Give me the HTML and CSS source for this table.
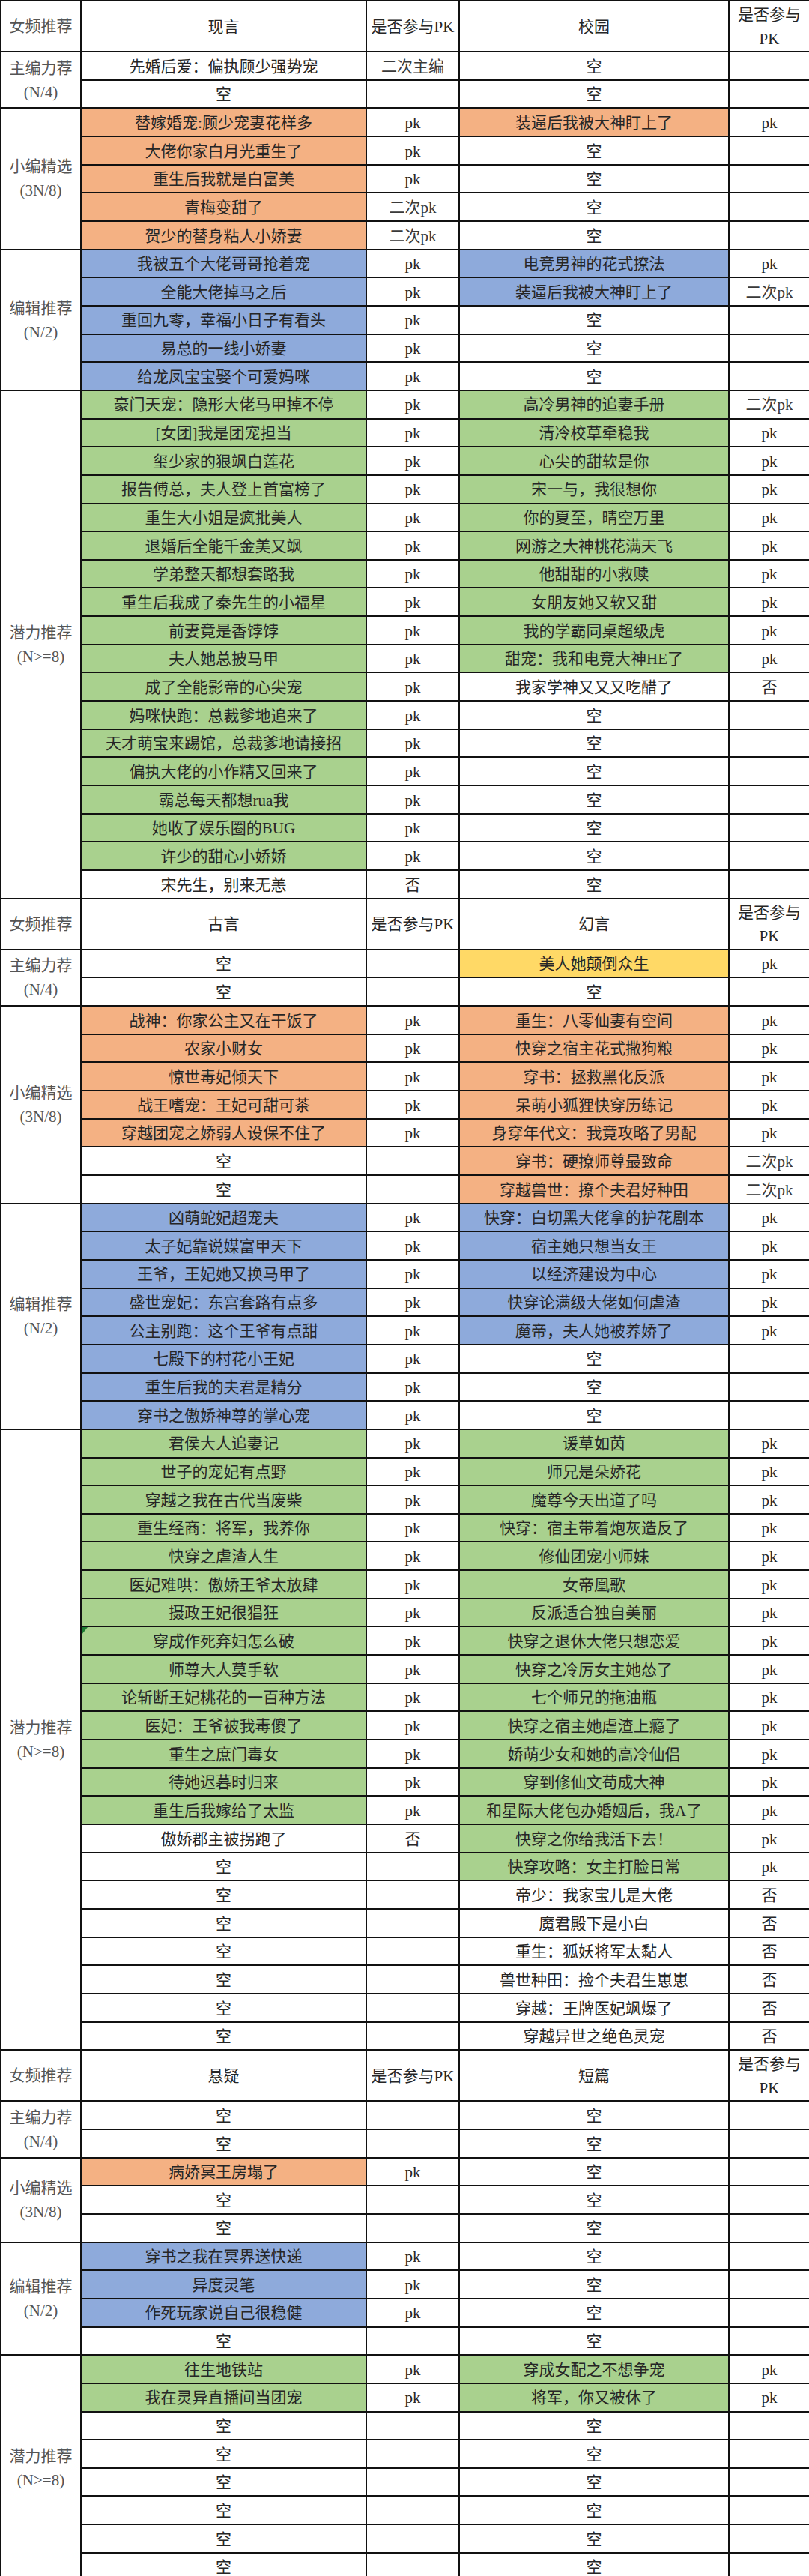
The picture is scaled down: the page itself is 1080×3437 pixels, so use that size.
FILE: index.html
```html
<!DOCTYPE html>
<html lang="zh-CN">
<head>
<meta charset="utf-8">
<title>女频推荐</title>
<link rel="stylesheet" href="styles.css">
</head>
<body>
<table class="sheet">
<colgroup><col class="c-label"><col class="c-title"><col class="c-pk"><col class="c-title2"><col class="c-pk2"></colgroup>
<tbody>
<tr class="hd"><td class="lab">女频推荐</td><td>现言</td><td>是否参与PK</td><td>校园</td><td>是否参与PK</td></tr>
<tr><td class="lab" rowspan="2">主编力荐<br>(N/4)</td><td>先婚后爱：偏执顾少强势宠</td><td class="muted">二次主编</td><td>空</td><td></td></tr>
<tr><td>空</td><td></td><td>空</td><td></td></tr>
<tr><td class="lab" rowspan="5">小编精选<br>(3N/8)</td><td class="o">替嫁婚宠:顾少宠妻花样多</td><td>pk</td><td class="o">装逼后我被大神盯上了</td><td>pk</td></tr>
<tr><td class="o">大佬你家白月光重生了</td><td>pk</td><td>空</td><td></td></tr>
<tr><td class="o">重生后我就是白富美</td><td>pk</td><td>空</td><td></td></tr>
<tr><td class="o">青梅变甜了</td><td class="muted">二次pk</td><td>空</td><td></td></tr>
<tr><td class="o">贺少的替身粘人小娇妻</td><td class="muted">二次pk</td><td>空</td><td></td></tr>
<tr><td class="lab" rowspan="5">编辑推荐<br>(N/2)</td><td class="b">我被五个大佬哥哥抢着宠</td><td>pk</td><td class="b">电竞男神的花式撩法</td><td>pk</td></tr>
<tr><td class="b">全能大佬掉马之后</td><td>pk</td><td class="b">装逼后我被大神盯上了</td><td class="muted">二次pk</td></tr>
<tr><td class="b">重回九零，幸福小日子有看头</td><td>pk</td><td>空</td><td></td></tr>
<tr><td class="b">易总的一线小娇妻</td><td>pk</td><td>空</td><td></td></tr>
<tr><td class="b">给龙凤宝宝娶个可爱妈咪</td><td>pk</td><td>空</td><td></td></tr>
<tr><td class="lab" rowspan="18">潜力推荐<br>(N&gt;=8)</td><td class="g">豪门天宠：隐形大佬马甲掉不停</td><td>pk</td><td class="g">高冷男神的追妻手册</td><td class="muted">二次pk</td></tr>
<tr><td class="g">[女团]我是团宠担当</td><td>pk</td><td class="g">清冷校草牵稳我</td><td>pk</td></tr>
<tr><td class="g">玺少家的狠飒白莲花</td><td>pk</td><td class="g">心尖的甜软是你</td><td>pk</td></tr>
<tr><td class="g">报告傅总，夫人登上首富榜了</td><td>pk</td><td class="g">宋一与，我很想你</td><td>pk</td></tr>
<tr><td class="g">重生大小姐是疯批美人</td><td>pk</td><td class="g">你的夏至，晴空万里</td><td>pk</td></tr>
<tr><td class="g">退婚后全能千金美又飒</td><td>pk</td><td class="g">网游之大神桃花满天飞</td><td>pk</td></tr>
<tr><td class="g">学弟整天都想套路我</td><td>pk</td><td class="g">他甜甜的小救赎</td><td>pk</td></tr>
<tr><td class="g">重生后我成了秦先生的小福星</td><td>pk</td><td class="g">女朋友她又软又甜</td><td>pk</td></tr>
<tr><td class="g">前妻竟是香饽饽</td><td>pk</td><td class="g">我的学霸同桌超级虎</td><td>pk</td></tr>
<tr><td class="g">夫人她总披马甲</td><td>pk</td><td class="g">甜宠：我和电竞大神HE了</td><td>pk</td></tr>
<tr><td class="g">成了全能影帝的心尖宠</td><td>pk</td><td>我家学神又又又吃醋了</td><td>否</td></tr>
<tr><td class="g">妈咪快跑：总裁爹地追来了</td><td>pk</td><td>空</td><td></td></tr>
<tr><td class="g">天才萌宝来踢馆，总裁爹地请接招</td><td>pk</td><td>空</td><td></td></tr>
<tr><td class="g">偏执大佬的小作精又回来了</td><td>pk</td><td>空</td><td></td></tr>
<tr><td class="g">霸总每天都想rua我</td><td>pk</td><td>空</td><td></td></tr>
<tr><td class="g">她收了娱乐圈的BUG</td><td>pk</td><td>空</td><td></td></tr>
<tr><td class="g">许少的甜心小娇娇</td><td>pk</td><td>空</td><td></td></tr>
<tr><td>宋先生，别来无恙</td><td>否</td><td>空</td><td></td></tr>

<tr class="hd"><td class="lab">女频推荐</td><td>古言</td><td>是否参与PK</td><td>幻言</td><td>是否参与PK</td></tr>
<tr><td class="lab" rowspan="2">主编力荐<br>(N/4)</td><td>空</td><td></td><td class="y">美人她颠倒众生</td><td>pk</td></tr>
<tr><td>空</td><td></td><td>空</td><td></td></tr>
<tr><td class="lab" rowspan="7">小编精选<br>(3N/8)</td><td class="o">战神：你家公主又在干饭了</td><td>pk</td><td class="o">重生：八零仙妻有空间</td><td>pk</td></tr>
<tr><td class="o">农家小财女</td><td>pk</td><td class="o">快穿之宿主花式撒狗粮</td><td>pk</td></tr>
<tr><td class="o">惊世毒妃倾天下</td><td>pk</td><td class="o">穿书：拯救黑化反派</td><td>pk</td></tr>
<tr><td class="o">战王嗜宠：王妃可甜可茶</td><td>pk</td><td class="o">呆萌小狐狸快穿历练记</td><td>pk</td></tr>
<tr><td class="o">穿越团宠之娇弱人设保不住了</td><td>pk</td><td class="o">身穿年代文：我竟攻略了男配</td><td>pk</td></tr>
<tr><td>空</td><td></td><td class="o">穿书：硬撩师尊最致命</td><td class="muted">二次pk</td></tr>
<tr><td>空</td><td></td><td class="o">穿越兽世：撩个夫君好种田</td><td class="muted">二次pk</td></tr>
<tr><td class="lab" rowspan="8">编辑推荐<br>(N/2)</td><td class="b">凶萌蛇妃超宠夫</td><td>pk</td><td class="b">快穿：白切黑大佬拿的护花剧本</td><td>pk</td></tr>
<tr><td class="b">太子妃靠说媒富甲天下</td><td>pk</td><td class="b">宿主她只想当女王</td><td>pk</td></tr>
<tr><td class="b">王爷，王妃她又换马甲了</td><td>pk</td><td class="b">以经济建设为中心</td><td>pk</td></tr>
<tr><td class="b">盛世宠妃：东宫套路有点多</td><td>pk</td><td class="b">快穿论满级大佬如何虐渣</td><td>pk</td></tr>
<tr><td class="b">公主别跑：这个王爷有点甜</td><td>pk</td><td class="b">魔帝，夫人她被养娇了</td><td>pk</td></tr>
<tr><td class="b">七殿下的村花小王妃</td><td>pk</td><td>空</td><td></td></tr>
<tr><td class="b">重生后我的夫君是精分</td><td>pk</td><td>空</td><td></td></tr>
<tr><td class="b">穿书之傲娇神尊的掌心宠</td><td>pk</td><td>空</td><td></td></tr>
<tr><td class="lab" rowspan="22">潜力推荐<br>(N&gt;=8)</td><td class="g">君侯大人追妻记</td><td>pk</td><td class="g">谖草如茵</td><td>pk</td></tr>
<tr><td class="g">世子的宠妃有点野</td><td>pk</td><td class="g">师兄是朵娇花</td><td>pk</td></tr>
<tr><td class="g">穿越之我在古代当废柴</td><td>pk</td><td class="g">魔尊今天出道了吗</td><td>pk</td></tr>
<tr><td class="g">重生经商：将军，我养你</td><td>pk</td><td class="g">快穿：宿主带着炮灰造反了</td><td>pk</td></tr>
<tr><td class="g">快穿之虐渣人生</td><td>pk</td><td class="g">修仙团宠小师妹</td><td>pk</td></tr>
<tr><td class="g">医妃难哄：傲娇王爷太放肆</td><td>pk</td><td class="g">女帝凰歌</td><td>pk</td></tr>
<tr><td class="g">摄政王妃很猖狂</td><td>pk</td><td class="g">反派适合独自美丽</td><td>pk</td></tr>
<tr><td class="g note">穿成作死弃妇怎么破</td><td>pk</td><td class="g">快穿之退休大佬只想恋爱</td><td>pk</td></tr>
<tr><td class="g">师尊大人莫手软</td><td>pk</td><td class="g">快穿之冷厉女主她怂了</td><td>pk</td></tr>
<tr><td class="g">论斩断王妃桃花的一百种方法</td><td>pk</td><td class="g">七个师兄的拖油瓶</td><td>pk</td></tr>
<tr><td class="g">医妃：王爷被我毒傻了</td><td>pk</td><td class="g">快穿之宿主她虐渣上瘾了</td><td>pk</td></tr>
<tr><td class="g">重生之庶门毒女</td><td>pk</td><td class="g">娇萌少女和她的高冷仙侣</td><td>pk</td></tr>
<tr><td class="g">待她迟暮时归来</td><td>pk</td><td class="g">穿到修仙文苟成大神</td><td>pk</td></tr>
<tr><td class="g">重生后我嫁给了太监</td><td>pk</td><td class="g">和星际大佬包办婚姻后，我A了</td><td>pk</td></tr>
<tr><td>傲娇郡主被拐跑了</td><td>否</td><td class="g">快穿之你给我活下去！</td><td>pk</td></tr>
<tr><td>空</td><td></td><td class="g">快穿攻略：女主打脸日常</td><td>pk</td></tr>
<tr><td>空</td><td></td><td>帝少：我家宝儿是大佬</td><td>否</td></tr>
<tr><td>空</td><td></td><td>魔君殿下是小白</td><td>否</td></tr>
<tr><td>空</td><td></td><td>重生：狐妖将军太黏人</td><td>否</td></tr>
<tr><td>空</td><td></td><td>兽世种田：捡个夫君生崽崽</td><td>否</td></tr>
<tr><td>空</td><td></td><td>穿越：王牌医妃飒爆了</td><td>否</td></tr>
<tr><td>空</td><td></td><td>穿越异世之绝色灵宠</td><td>否</td></tr>

<tr class="hd"><td class="lab">女频推荐</td><td>悬疑</td><td>是否参与PK</td><td>短篇</td><td>是否参与PK</td></tr>
<tr><td class="lab" rowspan="2">主编力荐<br>(N/4)</td><td>空</td><td></td><td>空</td><td></td></tr>
<tr><td>空</td><td></td><td>空</td><td></td></tr>
<tr><td class="lab" rowspan="3">小编精选<br>(3N/8)</td><td class="o">病娇冥王房塌了</td><td>pk</td><td>空</td><td></td></tr>
<tr><td>空</td><td></td><td>空</td><td></td></tr>
<tr><td>空</td><td></td><td>空</td><td></td></tr>
<tr><td class="lab" rowspan="4">编辑推荐<br>(N/2)</td><td class="b">穿书之我在冥界送快递</td><td>pk</td><td>空</td><td></td></tr>
<tr><td class="b">异度灵笔</td><td>pk</td><td>空</td><td></td></tr>
<tr><td class="b">作死玩家说自己很稳健</td><td>pk</td><td>空</td><td></td></tr>
<tr><td>空</td><td></td><td>空</td><td></td></tr>
<tr><td class="lab" rowspan="8">潜力推荐<br>(N&gt;=8)</td><td class="g">往生地铁站</td><td>pk</td><td class="g">穿成女配之不想争宠</td><td>pk</td></tr>
<tr><td class="g">我在灵异直播间当团宠</td><td>pk</td><td class="g">将军，你又被休了</td><td>pk</td></tr>
<tr><td>空</td><td></td><td>空</td><td></td></tr>
<tr><td>空</td><td></td><td>空</td><td></td></tr>
<tr><td>空</td><td></td><td>空</td><td></td></tr>
<tr><td>空</td><td></td><td>空</td><td></td></tr>
<tr><td>空</td><td></td><td>空</td><td></td></tr>
<tr><td>空</td><td></td><td>空</td><td></td></tr>
</tbody>
</table>
</body>
</html>
```

FILE: styles.css
```css
html, body {
  margin: 0;
  padding: 0;
  background: #ffffff;
}

.sheet {
  width: 1080px;
  table-layout: fixed;
  border-collapse: collapse;
  font-family: "Liberation Serif", "Noto Sans CJK SC", serif;
  font-size: 21px;
  line-height: 1.5;
  color: #262626;
}

.c-label { width: 107px; }
.c-title { width: 381px; }
.c-pk { width: 124px; }
.c-title2 { width: 360px; }
.c-pk2 { width: 108px; }

.sheet tr {
  height: 37.66px;
}

.sheet tr.hd {
  height: 66px;
}

.sheet td {
  border: 2px solid #111111;
  padding: 3px 4px 0;
  text-align: center;
  vertical-align: middle;
  white-space: normal;
  overflow: hidden;
}

.sheet td.lab {
  color: #555555;
  padding: 0 2px;
  line-height: 32px;
}

.sheet td.muted {
  color: #3a3a3a;
}

.o { background: #f4b183; }
.b { background: #8eaadb; }
.g { background: #a9d18e; }
.y { background: #ffd966; }

.sheet td.note {
  position: relative;
}

.sheet td.note::before {
  content: "";
  position: absolute;
  top: 0;
  left: 0;
  border-top: 10px solid #1e7b34;
  border-right: 8px solid transparent;
}
```
